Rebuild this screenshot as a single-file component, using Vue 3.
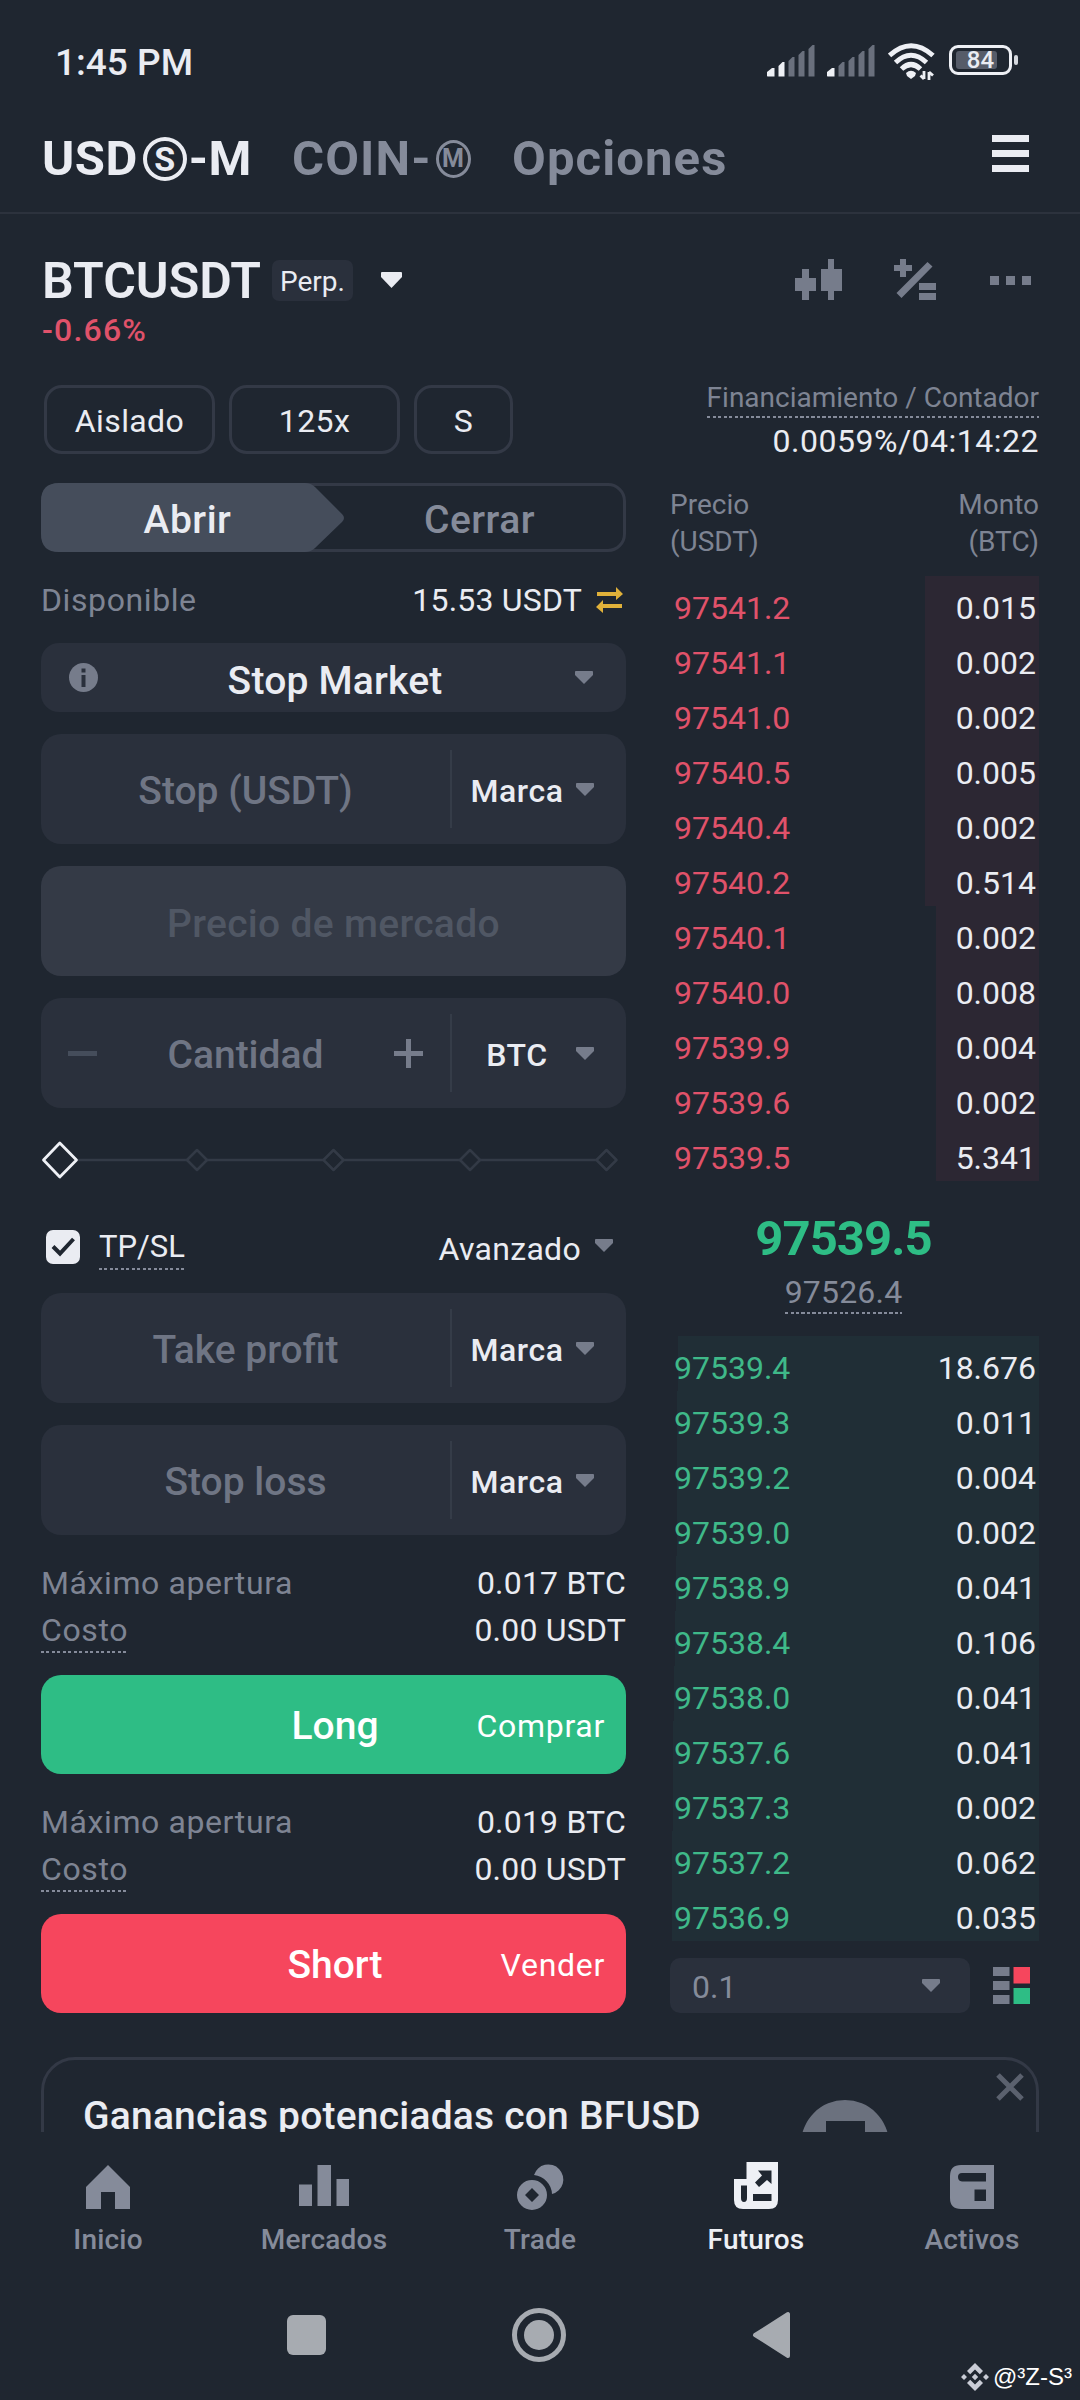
<template>
  <div class="screen">
    <header class="status-bar">
      <span class="clock">1:45 PM</span>
      <div class="status-icons">
        <svg
          v-for="(strength, i) in signals"
          :key="i"
          class="signal"
          width="48"
          height="32"
          viewBox="0 0 48 32"
        >
          <path
            v-for="(bar, b) in signalBars"
            :key="b"
            :d="bar"
            :fill="b < strength ? '#eef0f5' : '#6a707d'"
          />
        </svg>
        <svg class="wifi" width="47" height="38" viewBox="0 0 47 38">
          <g fill="none" stroke="#eef0f5" stroke-width="5">
            <path d="M1.5 12.5Q23 -7 45 12.5" />
            <path d="M7.5 19.5Q23 5 38.500 19.500" />
            <path d="M13.500 26Q23 17 32.500 26" />
          </g>
          <path d="M18 30q5-4.500 10 0l-1 3-4 3-4-3z" fill="#eef0f5" />
          <path
            d="M36 28v8M36 36l-3.500-3.500M41 37v-8M41 29l4 3.500"
            fill="none"
            stroke="#eef0f5"
            stroke-width="2.800"
          />
        </svg>
        <div class="battery">
          <div class="battery-level"></div>
          <span>84</span>
        </div>
      </div>
    </header>

    <nav class="tabs">
      <span class="tab active">USD<i class="ring big">S</i>-M</span>
      <span class="tab coin">COIN-<i class="ring">M</i></span>
      <span class="tab options">Opciones</span>
      <button class="menu" aria-label="Menu"><b></b><b></b><b></b></button>
    </nav>

    <section class="pair">
      <div class="pair-row">
        <h1>BTCUSDT</h1>
        <span class="badge">Perp.</span>
        <Caret class="pair-caret" />
        <div class="pair-tools">
          <svg width="48" height="42" viewBox="0 0 48 42">
            <path
              d="M0 19h7v-9h7v9h7v13h-7v9H7v-9H0zM26 10h7V0h6v10h8v22h-8v9h-6v-9h-7z"
            />
          </svg>
          <svg class="calc" width="42" height="42" viewBox="0 0 42 42">
            <path
              d="M6 0h6v6h6v6h-6v6H6v-6H0V6h6zM33.500 3l5 4.500L7.500 39l-5-5zM25 24h17v7H25zM25 34h17v7H25z"
            />
          </svg>
          <svg width="41" height="9" viewBox="0 0 41 9">
            <path d="M0 0h9v9H0zM16 0h9v9h-9zM32 0h9v9h-9z" />
          </svg>
        </div>
      </div>
      <div class="change">-0.66%</div>
    </section>

    <main class="trade">
      <div class="form">
        <div class="chips">
          <button class="chip wide">Aislado</button>
          <button class="chip wide">125x</button>
          <button class="chip">S</button>
        </div>

        <div class="segment">
          <svg class="segment-fill" width="304" height="69" viewBox="0 0 304 69">
            <path
              d="M18 0H264q6 0 10 4L301 31q4 4 0 8L274 65q-4 4-10 4H18Q0 69 0 51V18Q0 0 18 0z"
            />
          </svg>
          <span class="open">Abrir</span>
          <span class="close">Cerrar</span>
        </div>

        <div class="line available">
          <span class="muted">Disponible</span>
          <span class="value">15.53 USDT</span>
          <svg class="swap" width="27" height="26" viewBox="0 0 27 26">
            <path d="M1 5h19V0l7 7-7 6V9H1zM26 17H7v-4l-7 7 7 6v-5h19z" />
          </svg>
        </div>

        <div class="select">
          <svg class="info" width="29" height="29" viewBox="0 0 29 29">
            <circle cx="14.500" cy="14.500" r="14.500" />
            <path d="M12.500 5.500h4v4h-4zM12.500 12h4v12h-4z" fill="#2a303c" />
          </svg>
          <span>Stop Market</span>
          <Caret class="small" />
        </div>

        <div class="field">
          <span class="placeholder">Stop (USDT)</span>
          <span class="unit">Marca</span>
          <Caret class="small" />
        </div>

        <div class="field disabled">Precio de mercado</div>

        <div class="field">
          <i class="minus"></i>
          <span class="placeholder">Cantidad</span>
          <i class="plus"></i>
          <span class="unit">BTC</span>
          <Caret class="small" />
        </div>

        <svg class="slider" width="585" height="40" viewBox="0 0 585 40">
          <path d="M37 20H565" stroke="#333a46" stroke-width="2.500" />
          <path
            v-for="x in [156, 292.5, 429, 565.5]"
            :key="x"
            :d="`M${x - 10} 20l10-10 10 10-10 10z`"
            fill="#1f2630"
            stroke="#333a46"
            stroke-width="2.5"
            stroke-linejoin="round"
          />
          <path
            d="M2.500 20L18.800 3 35.500 20 18.800 37z"
            fill="#1f2630"
            stroke="#eef0f5"
            stroke-width="2.800"
            stroke-linejoin="round"
          />
        </svg>

        <div class="line tpsl">
          <svg width="34" height="34" viewBox="0 0 34 34">
            <rect width="34" height="34" rx="7" fill="#eaecf2" />
            <path
              d="M7 16.500l7 7L27.500 9"
              fill="none"
              stroke="#1f2630"
              stroke-width="4"
            />
          </svg>
          <span class="dotted tpsl-label">TP/SL</span>
          <span class="advanced">Avanzado</span>
          <Caret class="small" />
        </div>

        <div v-for="name in ['Take profit', 'Stop loss']" :key="name" class="field">
          <span class="placeholder">{{ name }}</span>
          <span class="unit">Marca</span>
          <Caret class="small" />
        </div>

        <template v-for="order in orders" :key="order.side">
          <div class="totals">
            <div class="line">
              <span class="muted">Máximo apertura</span>
              <span class="value">{{ order.max }}</span>
            </div>
            <div class="line">
              <span class="muted dotted costo">Costo</span>
              <span class="value">0.00 USDT</span>
            </div>
          </div>
          <button class="submit" :class="order.side">
            {{ order.label }}<span>{{ order.action }}</span>
          </button>
        </template>
      </div>

      <div class="book">
        <div class="funding-label">
          <span class="dotted">Financiamiento / Contador</span>
        </div>
        <div class="funding">0.0059%/04:14:22</div>
        <div class="book-head">
          <span>Precio<br />(USDT)</span>
          <span>Monto<br />(BTC)</span>
        </div>

        <div v-for="row in asks" :key="row[0]" class="row ask">
          <i class="depth" :style="{ width: row[2] + 'px' }"></i>
          <span>{{ row[0] }}</span><b>{{ row[1] }}</b>
        </div>

        <div class="mid">
          <div class="last">97539.5</div>
          <span class="mark dotted">97526.4</span>
        </div>

        <div v-for="row in bids" :key="row[0]" class="row bid">
          <i class="depth" :style="{ width: row[2] + 'px' }"></i>
          <span>{{ row[0] }}</span><b>{{ row[1] }}</b>
        </div>

        <div class="book-foot">
          <div class="precision">0.1<Caret class="small" /></div>
          <svg width="37" height="37" viewBox="0 0 37 37">
            <path
              d="M0 0h16.500v9H0zM0 14h16.500v9H0zM0 28h16.500v9H0z"
              fill="#767c8b"
            />
            <path d="M20.500 0H37v16.500H20.500z" fill="#f6465d" />
            <path d="M20.500 21H37v16H20.500z" fill="#2ebd85" />
          </svg>
        </div>
      </div>
    </main>

    <div class="banner-clip">
      <div class="banner">
        <span>Ganancias potenciadas con BFUSD</span>
        <svg class="banner-art" width="88" height="88" viewBox="0 0 88 88">
          <path
            d="M44 0a44 44 0 0 1 0 88a44 44 0 0 1 0-88M25 21v40h39V21z"
            fill="#6b717e"
            fill-rule="evenodd"
          />
        </svg>
        <svg class="banner-close" width="28" height="28" viewBox="0 0 28 28">
          <path d="M2 2l24 24M26 2L2 26" stroke="#5b616e" stroke-width="5" />
        </svg>
      </div>
    </div>

    <nav class="bottom-nav">
      <a v-for="item in navItems" :key="item.label" :class="{ active: item.active }">
        <svg width="52" height="48" viewBox="0 0 52 48">
          <path :d="item.icon" fill="currentColor" fill-rule="evenodd" />
        </svg>
        <span>{{ item.label }}</span>
      </a>
    </nav>

    <footer class="system-nav">
      <svg width="504" height="56" viewBox="0 0 504 56" fill="#a7abb1">
        <rect x="0" y="8" width="39" height="40" rx="6" />
        <circle cx="252" cy="28" r="24.500" fill="none" stroke="#a7abb1" stroke-width="5" />
        <circle cx="252" cy="28" r="15" />
        <path
          d="M468 28L501 7v42z"
          stroke="#a7abb1"
          stroke-width="4"
          stroke-linejoin="round"
        />
      </svg>
    </footer>

    <div class="watermark">
      <svg width="28" height="28" viewBox="0 0 28 28" fill="#c9ccd6">
        <path
          d="M14 0l8 8-3.200 3.200L14 6.400l-4.800 4.800L6 8zM14 28l8-8-3.200-3.200-4.800 4.800-4.800-4.800L6 20zM3 11l3 3-3 3-3-3zM25 11l3 3-3 3-3-3zM14 10.800l3.200 3.200-3.200 3.200-3.200-3.200z"
        />
      </svg>
      <span>@³Z-S³</span>
    </div>
  </div>
</template>

<script setup>
import { h } from "vue";

// Small rounded dropdown marker used all over the form
const Caret = () =>
  h("svg", { class: "caret", viewBox: "0 0 21 16", preserveAspectRatio: "none" }, [
    h("path", { d: "M1 0H20Q21 0 21 1V5L10.5 16 0 5V1Q0 0 1 0z", fill: "currentColor" }),
  ]);

const signals = [2, 1];
const signalBars = [
  "M0 31v-4l5-4h2.500v8.500h-7z",
  "M11.500 31v-10l4-4h2v14.500h-6z",
  "M21.500 31v-15l4-4h2v19.500h-6z",
  "M31.500 31v-21l4-4h2v25.500h-6z",
  "M41.500 31v-27l4-4h2v31.500h-6z",
];

const orders = [
  { side: "long", label: "Long", action: "Comprar", max: "0.017 BTC" },
  { side: "short", label: "Short", action: "Vender", max: "0.019 BTC" },
];

// [price, amount, depth width]
const asks = [
  ["97541.2", "0.015", 114],
  ["97541.1", "0.002", 114],
  ["97541.0", "0.002", 114],
  ["97540.5", "0.005", 114],
  ["97540.4", "0.002", 114],
  ["97540.2", "0.514", 114],
  ["97540.1", "0.002", 103],
  ["97540.0", "0.008", 103],
  ["97539.9", "0.004", 103],
  ["97539.6", "0.002", 103],
  ["97539.5", "5.341", 103],
];

const bids = [
  ["97539.4", "18.676", 361],
  ["97539.3", "0.011", 362],
  ["97539.2", "0.004", 362],
  ["97539.0", "0.002", 362],
  ["97538.9", "0.041", 363],
  ["97538.4", "0.106", 364],
  ["97538.0", "0.041", 365],
  ["97537.6", "0.041", 366],
  ["97537.3", "0.002", 366],
  ["97537.2", "0.062", 367],
  ["97536.9", "0.035", 367],
];

const navItems = [
  { label: "Inicio", icon: "M26 2L48 24V46H33V29H19V46H4V24z" },
  { label: "Mercados", icon: "M1 21.500H14V43H1zM19.500 2H33V43H19.500zM38.500 16H51V43H38.500z" },
  {
    label: "Trade",
    icon: "M18 17a15 15 0 1 1 0 30a15 15 0 0 1 0-30M18 25l-7 7 7 7 7-7zM20 12a15 15 0 1 1 18 19A20 20 0 0 0 20 12",
  },
  {
    label: "Futuros",
    active: true,
    icon: "M16.500 -1H48V37Q48 46 39 46H13Q4 46 4 37V16H16.500zM11 22.500V35q0 4 3 4t3-4V22.500zM23 31V38H41.500V31zM28 7.500H41.500V21L37 17l-8 7-4-4.500 7-7z",
  },
  {
    label: "Activos",
    icon: "M15 2H48V46H15Q4 46 4 35V13Q4 2 15 2zM16 10q-4 0-4 4t4 4.500H40V10zM28.500 26.500V38H40V26.500z",
  },
];
</script>

<style>
body {
  background: #1f2630;
}
</style>

<style scoped>
.screen {
  position: relative;
  width: 1080px;
  height: 2400px;
  overflow: hidden;
  background: #1f2630;
  color: #eaecf2;
  font-family: Roboto, "Noto Sans", sans-serif;
  font-size: 32px;
  white-space: nowrap;
}

.screen * {
  box-sizing: border-box;
}

svg {
  display: block;
  flex: none;
}

button {
  padding: 0;
  border: 0;
  background: none;
  color: inherit;
  font: inherit;
}

i {
  font-style: normal;
}

.status-bar {
  display: flex;
  justify-content: space-between;
  height: 120px;
  padding: 0 62px 0 55px;
}

.clock {
  padding-top: 42px;
  font-size: 37px;
  font-weight: 500;
  line-height: 41px;
}

.status-icons {
  display: flex;
  padding-top: 45px;
}

.signal {
  margin-right: 12px;
}

.wifi {
  margin: -2px 14px 0 1px;
}

.battery {
  position: relative;
  display: flex;
  align-items: center;
  justify-content: center;
  width: 63px;
  height: 30px;
  margin-right: 6px;
  border: 3px solid #eef0f5;
  border-radius: 9px;
  font-size: 24px;
  font-weight: 500;
}

.battery::after {
  content: "";
  position: absolute;
  right: -9px;
  top: 7px;
  width: 4px;
  height: 10px;
  border-radius: 2px;
  background: #d5d8de;
}

.battery-level {
  position: absolute;
  left: 4px;
  top: 3px;
  width: 41px;
  height: 18px;
  border-radius: 3px;
  background: #565c69;
}

.battery span {
  position: relative;
}

.tabs {
  display: flex;
  height: 94px;
  padding: 0 51px 0 42px;
  border-bottom: 2px solid #2c323d;
  color: #858b9a;
  font-size: 49px;
  font-weight: 700;
  letter-spacing: 1.1px;
  line-height: 78px;
}

.tab {
  display: flex;
  align-items: center;
  height: 77px;
}

.tab.active {
  width: 210px;
  color: #eaecf2;
}

.coin {
  width: 182px;
  margin-left: 40px;
}

.options {
  margin-left: 38px;
}

.ring {
  display: flex;
  align-items: center;
  justify-content: center;
  width: 35px;
  height: 38px;
  margin-left: 4px;
  border: 3px solid;
  border-radius: 50%;
  font-size: 25px;
  letter-spacing: 0;
}

.ring.big {
  width: 44px;
  height: 44px;
  margin: 0 2px 0 5px;
  border-width: 4px;
  font-size: 34px;
}

.tab.active {
  letter-spacing: 0.5px;
}

.menu {
  display: flex;
  flex-direction: column;
  gap: 8px;
  width: 37px;
  margin: 15px 0 0 auto;
}

.menu b {
  height: 7px;
  background: #eaecf2;
}

.pair {
  height: 171px;
  padding: 37px 49px 0 42px;
}

.pair-row {
  display: flex;
  align-items: center;
  height: 58px;
}

h1 {
  width: 230px;
  margin: 0;
  padding-top: 2px;
  font-size: 50px;
  font-weight: 600;
}

.badge {
  width: 81px;
  height: 41px;
  border-radius: 7px;
  background: #2a303c;
  font-size: 28px;
  line-height: 43px;
  text-align: center;
}

.caret {
  display: block;
  width: 21px;
  height: 16px;
}

.caret.small {
  width: 18px;
  height: 13px;
  color: #767c8b;
}

.pair-caret {
  margin-left: 28px;
}

.pair-tools {
  display: flex;
  align-items: center;
  margin-left: auto;
  fill: #767c8b;
}

.calc {
  margin: 0 54px 0 51px;
}

.change {
  height: 50px;
  color: #e0526a;
  font-size: 32px;
  font-weight: 500;
  letter-spacing: 1.2px;
  line-height: 43px;
}

.trade {
  display: grid;
  grid-template-columns: 585px 369px;
  column-gap: 44px;
  height: 1628px;
  padding: 0 41px;
}

.chips {
  display: flex;
  gap: 14px;
  padding-left: 3px;
}

.chip {
  width: 99px;
  height: 69px;
  padding-top: 2px;
  border: 3px solid #333946;
  border-radius: 18px;
  letter-spacing: 0.4px;
}

.chip.wide {
  width: 171px;
}

.segment {
  position: relative;
  display: flex;
  height: 69px;
  margin-top: 29px;
  border: 3px solid #333946;
  border-radius: 18px;
  font-size: 39px;
  font-weight: 500;
  letter-spacing: 0.5px;
  line-height: 69px;
  text-align: center;
}

.segment-fill {
  position: absolute;
  left: -3px;
  top: -3px;
  fill: #454d5b;
}

.open {
  position: relative;
  width: 290px;
}

.close {
  width: 295px;
  padding-left: 5px;
  color: #858b9a;
}

.muted {
  color: #7e8493;
  letter-spacing: 0.6px;
}

.line {
  display: flex;
  align-items: center;
  height: 47px;
}

.line .value {
  margin-left: auto;
  letter-spacing: 0.2px;
}

.available {
  height: 40px;
  margin: 28px 0 23px;
}

.swap {
  margin: 0 3px 0 14px;
  fill: #e0b13a;
}

.select {
  display: flex;
  align-items: center;
  height: 69px;
  padding: 0 33px 0 28px;
  border-radius: 18px;
  background: #2a303c;
  font-size: 39px;
  font-weight: 500;
}

.select span {
  flex: 1;
  padding: 6px 3px 0 0;
  letter-spacing: 0.2px;
  text-align: center;
}

.info {
  fill: #767c8b;
}

.field {
  display: flex;
  align-items: center;
  height: 110px;
  margin-top: 22px;
  padding-right: 32px;
  border-radius: 20px;
  background: #2a303c;
}

.placeholder {
  flex: 1;
  padding-top: 3px;
  color: #6f7584;
  font-size: 39px;
  font-weight: 500;
  text-align: center;
}

.unit {
  width: 126px;
  height: 78px;
  padding-left: 6px;
  border-left: 2px solid #353c48;
  font-weight: 500;
  letter-spacing: 0.6px;
  line-height: 82px;
  text-align: center;
}

.field.disabled {
  justify-content: center;
  padding: 6px 0 0;
  background: #343a46;
  color: #505764;
  font-size: 39px;
  font-weight: 500;
  letter-spacing: 0.3px;
}

.minus {
  width: 29px;
  height: 5px;
  margin-left: 27px;
  background: #454d5b;
}

.plus {
  width: 29px;
  height: 29px;
  margin-right: 27px;
  background: linear-gradient(#767c8b, #767c8b) center / 29px 5px no-repeat,
    linear-gradient(#767c8b, #767c8b) center / 5px 29px no-repeat;
}

.slider {
  margin: 32px 0 44px;
}

.tpsl {
  height: 46px;
  margin-bottom: 23px;
  padding: 0 13px 0 5px;
}

.tpsl + .field {
  margin-top: 0;
}

.tpsl-label {
  margin-left: 19px;
  font-size: 31px;
}

.advanced {
  margin: 4px 14px 0 auto;
  letter-spacing: 0.3px;
}

.tpsl .small {
  margin-bottom: 3px;
}

.dotted {
  background: repeating-linear-gradient(
      90deg,
      #858b9a 0 3px,
      transparent 3px 5.5px
    )
    left bottom / 100% 2px no-repeat;
}

.tpsl-label,
.costo {
  height: 46px;
  line-height: 46px;
}

.totals {
  padding: 24px 0 22px;
}

.submit {
  display: flex;
  align-items: center;
  justify-content: center;
  position: relative;
  width: 585px;
  height: 99px;
  padding: 3px 0 0 3px;
  border-radius: 20px;
  color: #fff;
  font-size: 39px;
  font-weight: 500;
}

.submit span {
  position: absolute;
  right: 21px;
  font-size: 32px;
  font-weight: 400;
  letter-spacing: 0.7px;
}

.long {
  background: #2ebd85;
}

.short {
  background: #f6465d;
}

.book {
  margin-top: -7px;
}

.funding-label {
  height: 40px;
  color: #7e8493;
  font-size: 28px;
  line-height: 40px;
  text-align: right;
}

.funding-label .dotted {
  display: inline-block;
  height: 40px;
}

.funding {
  height: 69px;
  font-size: 32px;
  letter-spacing: 0.5px;
  line-height: 46px;
  text-align: right;
}

.book-head {
  display: flex;
  justify-content: space-between;
  height: 89px;
  color: #7e8493;
  font-size: 28px;
  line-height: 36.500px;
}

.book-head span:last-child {
  text-align: right;
}

.row {
  position: relative;
  display: flex;
  justify-content: space-between;
  height: 55px;
  padding: 0 3px 0 4px;
  line-height: 65px;
}

.row b {
  position: relative;
  font-weight: 400;
}

.row span {
  position: relative;
}

.depth {
  position: absolute;
  right: 0;
  top: 0;
  height: 55px;
}

.ask {
  color: #e0526a;
}

.bid {
  color: #3fb989;
}

.row b {
  color: #eaecf2;
}

.ask .depth {
  background: #2c2733;
}

.bid .depth {
  background: #202e36;
}

.mid {
  height: 155px;
  padding: 27px 22px 0 0;
  text-align: center;
}

.last {
  height: 62px;
  color: #2ebd85;
  font-size: 49px;
  font-weight: 700;
  letter-spacing: -0.9px;
  line-height: 62px;
}

.mark {
  display: inline-block;
  height: 44px;
  color: #858b9a;
  letter-spacing: 0.2px;
  line-height: 44px;
}

.book-foot {
  display: flex;
  align-items: center;
  justify-content: space-between;
  margin-top: 17px;
  padding-right: 9px;
}

.precision {
  display: flex;
  align-items: center;
  justify-content: space-between;
  width: 300px;
  height: 55px;
  padding: 2px 30px 0 22px;
  border-radius: 10px;
  background: #2a303c;
  color: #858b9a;
}

.precision .small {
  margin-bottom: 3px;
}

.banner-clip {
  height: 75px;
  margin-top: 44px;
  padding: 0 41px;
  overflow: hidden;
}

.banner {
  display: flex;
  height: 160px;
  padding: 40px 12px 0 39px;
  border: 3px solid #333946;
  border-radius: 34px;
  font-size: 39px;
  font-weight: 500;
  letter-spacing: 0.2px;
  line-height: 32px;
}

.banner-art {
  margin-left: auto;
}

.banner-close {
  margin: -27px 0 0 107px;
}

.bottom-nav {
  display: grid;
  grid-template-columns: repeat(5, 216px);
  height: 148px;
  padding-top: 31px;
  color: #858b9a;
}

.bottom-nav a {
  display: flex;
  flex-direction: column;
  align-items: center;
  font-size: 28px;
  font-weight: 500;
  letter-spacing: 0.2px;
  line-height: 32px;
}

.bottom-nav svg {
  overflow: visible;
}

.bottom-nav span {
  margin-top: 13px;
}

.bottom-nav .active {
  color: #eef0f5;
}

.system-nav {
  padding: 27px 0 0 287px;
}

.watermark {
  position: absolute;
  right: 8px;
  bottom: 9px;
  display: flex;
  align-items: center;
  gap: 4px;
  color: #fff;
  font-family: "Liberation Sans", sans-serif;
  font-size: 24px;
}
</style>
